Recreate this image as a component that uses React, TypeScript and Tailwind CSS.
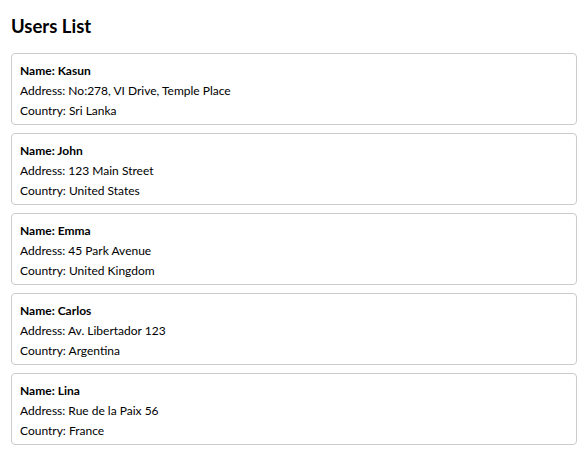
const users = [
  { name: "Kasun", address: "No:278, VI Drive, Temple Place", country: "Sri Lanka" },
  { name: "John", address: "123 Main Street", country: "United States" },
  { name: "Emma", address: "45 Park Avenue", country: "United Kingdom" },
  { name: "Carlos", address: "Av. Libertador 123", country: "Argentina" },
  { name: "Lina", address: "Rue de la Paix 56", country: "France" },
]

export default function App() {
  return (
    <div className="min-h-screen bg-white pl-[11px] pr-[8px] pt-[13px] font-['Lato',sans-serif] text-black">
      <h2 className="mb-[14px] text-[18.5px] leading-[26px] font-bold">Users List</h2>

      <div className="flex flex-col gap-2">
        {users.map((u) => (
          <div key={u.name} className="rounded-[4px] border border-[#cccccc] px-2 pt-[7px] pb-[3px] text-[12px] leading-[20px]">
            <div className="font-bold">Name: {u.name}</div>
            <div>Address: {u.address}</div>
            <div>Country: {u.country}</div>
          </div>
        ))}
      </div>
    </div>
  )
}
